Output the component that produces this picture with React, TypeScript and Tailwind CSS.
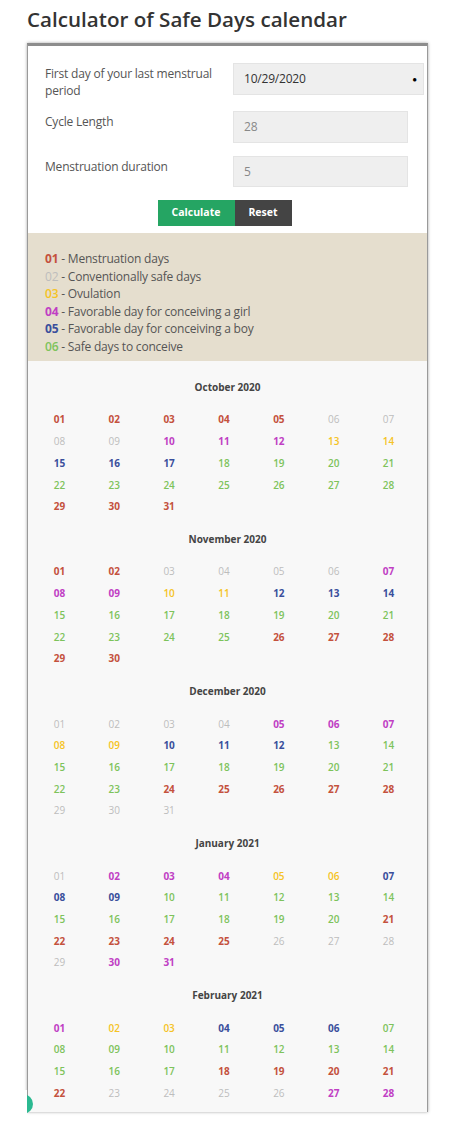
import React from "react";

type Kind = "r" | "g" | "y" | "p" | "b" | "n";

const kindClass: Record<Kind, string> = {
  r: "text-[#c4513d] font-bold",
  g: "text-[#bdbdbd] font-normal",
  y: "text-[#f5c324] font-semibold",
  p: "text-[#c03fc4] font-bold",
  b: "text-[#3a4f9c] font-bold",
  n: "text-[#7dc35b] font-semibold",
};

// one letter per day of the month
const months: { name: string; codes: string }[] = [
  { name: "October 2020", codes: "rrrrrggggpppyybbbnnnnnnnnnnnrrr" },
  { name: "November 2020", codes: "rrggggpppyybbbnnnnnnnnnnnrrrrr" },
  { name: "December 2020", codes: "ggggpppyybbbnnnnnnnnnnnrrrrrggg" },
  { name: "January 2021", codes: "gpppyybbbnnnnnnnnnnnrrrrrggggpp" },
  { name: "February 2021", codes: "pyybbbnnnnnnnnnnnrrrrrggggpp" },
];

const legend: { num: string; kind: Kind; text: string }[] = [
  { num: "01", kind: "r", text: "Menstruation days" },
  { num: "02", kind: "g", text: "Conventionally safe days" },
  { num: "03", kind: "y", text: "Ovulation" },
  { num: "04", kind: "p", text: "Favorable day for conceiving a girl" },
  { num: "05", kind: "b", text: "Favorable day for conceiving a boy" },
  { num: "06", kind: "n", text: "Safe days to conceive" },
];

const Month = ({ name, codes }: { name: string; codes: string }) => (
  <div className="pb-[15px]">
    <div className="h-[14px] leading-[14px] text-center text-[10px] font-bold text-[#444]">{name}</div>
    <div className="mt-[14.6px] ml-[4px] w-[384px] grid grid-cols-7 auto-rows-[21.7px] items-center">
      {codes.split("").map((c, i) => (
        <div key={i} className={`text-center text-[10px] leading-none ${kindClass[c as Kind]}`}>
          {String(i + 1).padStart(2, "0")}
        </div>
      ))}
    </div>
  </div>
);

export default function App() {
  return (
    <div className="relative w-[450px] h-[1125px] overflow-hidden bg-white font-['Open_Sans','Liberation_Sans',sans-serif]">
      <h1 className="ml-[27px] mt-[4px] h-[30px] leading-[30px] text-[20.6px] font-semibold text-[#333]">
        Calculator of Safe Days calendar
      </h1>

      <div className="mt-[9px] ml-[27px] w-[401px] h-[1069px] overflow-hidden border-x border-[#9a9a9a] border-t-[3px] border-t-[#8d8d8d] shadow-[0_0_3px_rgba(0,0,0,0.35)]">
        {/* form */}
        <div className="bg-white pt-[17px] pb-[7px] text-[12px] tracking-[-0.2px] text-[#555]">
          <div className="flex h-[32px]">
            <div className="w-[205px] shrink-0 pl-[17px] pt-[2px] leading-[17px]">
              First day of your last menstrual period
            </div>
            <div className="w-[191px] h-[32px] bg-[#efefef] border border-[#e4e4e4] flex items-center justify-between pl-[10px] pr-[6px] text-[#333]">
              <span>10/29/2020</span>
              <span className="text-[8px] text-black">●</span>
            </div>
          </div>
          <div className="flex h-[32px] mt-[16px]">
            <div className="w-[205px] shrink-0 pl-[17px] pt-[2px] leading-[17px]">Cycle Length</div>
            <div className="w-[175px] h-[32px] bg-[#efefef] border border-[#e4e4e4] flex items-center pl-[10px] text-[#888]">
              28
            </div>
          </div>
          <div className="flex h-[31px] mt-[13px]">
            <div className="w-[205px] shrink-0 pl-[17px] pt-[2px] leading-[17px]">Menstruation duration</div>
            <div className="w-[175px] h-[31px] bg-[#efefef] border border-[#e4e4e4] flex items-center pl-[10px] text-[#888]">
              5
            </div>
          </div>
          <div className="mt-[13px] flex justify-center pr-[6px] tracking-normal">
            <button className="w-[77px] h-[26px] bg-[#25a563] text-white text-[10.5px] font-bold">Calculate</button>
            <button className="w-[57px] h-[26px] bg-[#444] text-white text-[10.5px] font-bold">Reset</button>
          </div>
        </div>

        {/* legend */}
        <div className="bg-[#e5dece] pt-[17px] pb-[6px] pl-[17px] text-[12px] tracking-[-0.2px] leading-[17.5px] text-[#555]">
          {legend.map((l) => (
            <div key={l.num}>
              <span className={kindClass[l.kind]}>{l.num}</span> - {l.text}
            </div>
          ))}
        </div>

        {/* calendar */}
        <div className="bg-[#f8f8f8] pt-[19px] h-full">
          {months.map((m) => (
            <Month key={m.name} name={m.name} codes={m.codes} />
          ))}
        </div>
      </div>

      <div className="absolute left-[13px] top-[1094px] w-[20px] h-[20px] rounded-full bg-[#2bb991]" />
      <div className="absolute left-0 top-[1090px] w-[27px] h-[30px] bg-white" />
    </div>
  );
}
